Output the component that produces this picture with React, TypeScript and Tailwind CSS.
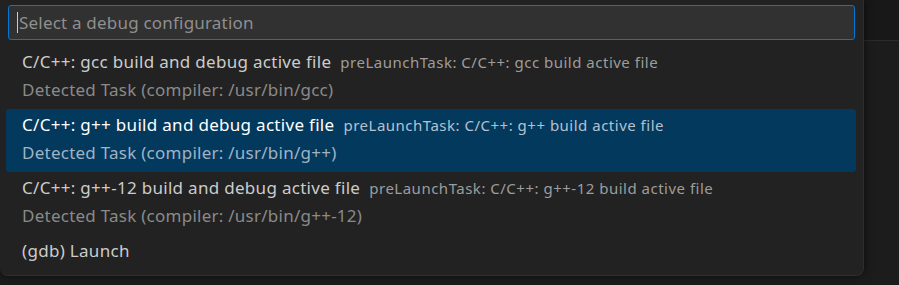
import React from 'react'

type Item = {
  label: string
  description?: string
  detail?: string
  selected?: boolean
}

const items: Item[] = [
  {
    label: 'C/C++: gcc build and debug active file',
    description: 'preLaunchTask: C/C++: gcc build active file',
    detail: 'Detected Task (compiler: /usr/bin/gcc)',
  },
  {
    label: 'C/C++: g++ build and debug active file',
    description: 'preLaunchTask: C/C++: g++ build active file',
    detail: 'Detected Task (compiler: /usr/bin/g++)',
    selected: true,
  },
  {
    label: 'C/C++: g++-12 build and debug active file',
    description: 'preLaunchTask: C/C++: g++-12 build active file',
    detail: 'Detected Task (compiler: /usr/bin/g++-12)',
  },
  { label: '(gdb) Launch' },
]

function Row({ item }: { item: Item }) {
  const sel = item.selected
  return (
    <div
      className={
        'pl-4 pr-3 pt-[2px] pb-[5px] rounded-[3px] ' + (sel ? 'bg-[#04395e]' : '')
      }
    >
      <div className="h-[28px] flex items-center whitespace-nowrap">
        <span className={'text-[17px] tracking-[0.3px] ' + (sel ? 'text-white' : 'text-[#cccccc]')}>
          {item.label}
        </span>
        {item.description && (
          <span
            className={
              'ml-[9px] text-[15px] tracking-[0.5px] ' + (sel ? 'text-[#b4c2cf]' : 'text-[#9d9d9d]')
            }
          >
            {item.description}
          </span>
        )}
      </div>
      {item.detail && (
        <div
          className={
            'h-[28px] flex items-center whitespace-nowrap text-[17px] tracking-[0.25px] ' +
            (sel ? 'text-[#9fb3c5]' : 'text-[#8a8a8a]')
          }
        >
          {item.detail}
        </div>
      )}
    </div>
  )
}

export default function App() {
  return (
    <div
      className="relative w-[899px] h-[285px] overflow-hidden bg-[#1c1c1c]"
      style={{ fontFamily: '"Noto Sans", "Open Sans", sans-serif' }}
    >
      {/* editor chrome behind the picker */}
      <div className="h-[41px] bg-[#181818] border-b border-[#2b2b2b]" />

      {/* quick pick */}
      <div className="absolute left-0 top-0 w-[864px] h-[276px] bg-[#222222] border-r border-b border-[#2e2e2e] rounded-br-[8px] rounded-bl-[8px] shadow-[0_0_8px_rgba(0,0,0,0.6)]">
        <div className="mx-2 mt-[5px] h-[35px] flex items-center bg-[#313131] border border-[#0078d4] rounded-[3px] pl-[8px]">
          <span className="w-px h-[21px] bg-[#cccccc]" />
          <span className="ml-[1px] text-[17px] tracking-[0.2px] text-[#8f8f8f] whitespace-nowrap">
            Select a debug configuration
          </span>
        </div>
        <div className="mt-[6px] px-[6px] pr-[7px]">
          {items.map((it, i) => (
            <Row key={i} item={it} />
          ))}
        </div>
      </div>
    </div>
  )
}
